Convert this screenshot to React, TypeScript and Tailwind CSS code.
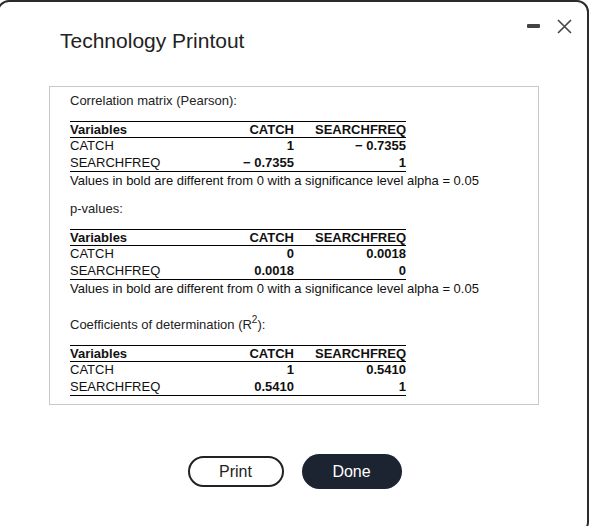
import React from "react";

type Row = { name: string; a: string; b: string };

const tables: { caption: React.ReactNode; rows: Row[]; note: boolean; gap: string }[] = [
  {
    caption: "Correlation matrix (Pearson):",
    rows: [
      { name: "CATCH", a: "1", b: "\u2212 0.7355" },
      { name: "SEARCHFREQ", a: "\u2212 0.7355", b: "1" },
    ],
    note: true,
    gap: "mt-0",
  },
  {
    caption: "p-values:",
    rows: [
      { name: "CATCH", a: "0", b: "0.0018" },
      { name: "SEARCHFREQ", a: "0.0018", b: "0" },
    ],
    note: true,
    gap: "mt-[12px]",
  },
  {
    caption: (
      <>
        Coefficients of determination (R
        <sup className="text-[10px] relative -top-[6px]">2</sup>):
      </>
    ),
    rows: [
      { name: "CATCH", a: "1", b: "0.5410" },
      { name: "SEARCHFREQ", a: "0.5410", b: "1" },
    ],
    note: false,
    gap: "mt-[20px]",
  },
];

function StatTable({ rows }: { rows: Row[] }) {
  return (
    <div className="w-[336px] border-t border-b border-black">
      <div className="grid grid-cols-[160px_64px_112px] h-[16px] leading-[16px] font-bold border-b border-black">
        <span>Variables</span>
        <span className="text-right">CATCH</span>
        <span className="text-right">SEARCHFREQ</span>
      </div>
      {rows.map((r) => (
        <div key={r.name} className="grid grid-cols-[160px_64px_112px] h-[16.5px] leading-[16px]">
          <span>{r.name}</span>
          <span className="text-right font-bold">{r.a}</span>
          <span className="text-right font-bold">{r.b}</span>
        </div>
      ))}
    </div>
  );
}

export default function App() {
  return (
    <div className="w-[590px] h-[526px] overflow-hidden bg-white font-['Liberation_Sans',Arial,sans-serif] text-[#111]">
      <div className="-ml-[3px] w-[592px] h-[534px] border-2 border-[#2b2b2b] rounded-[12px] bg-white">
        <div className="flex justify-between pt-[16px] pr-[15px]">
          <h1 className="ml-[61px] mt-[11px] text-[21px] leading-[24px] text-[#222]">Technology Printout</h1>
          <div className="flex items-center gap-[17px] h-[16px]">
            <span className="block w-[13px] h-[4px] rounded-[1px] bg-[#444]" />
            <svg width="15" height="15" viewBox="0 0 15 15" className="block">
              <path d="M1 1 L14 14 M14 1 L1 14" stroke="#444" strokeWidth="1.6" fill="none" />
            </svg>
          </div>
        </div>

        <div className="ml-[50px] mt-[33px] w-[490px] border border-[#c9c9c9] pt-[6px] pb-[8px] pl-[20px] text-[13px]">
          {tables.map((t, i) => (
            <div key={i} className={t.gap}>
              <p className="h-[16px] leading-[16px] text-[#222]">{t.caption}</p>
              <div className="mt-[12px]">
                <StatTable rows={t.rows} />
              </div>
              {t.note && (
                <p className="leading-[17px] whitespace-nowrap">
                  Values in bold are different from 0 with a significance level alpha = 0.05
                </p>
              )}
            </div>
          ))}
        </div>

        <div className="flex justify-center items-center gap-[18px] mt-[49px] ml-[3px]">
          <button className="w-[96px] h-[31px] rounded-full border-2 border-[#222] bg-white text-[16px] text-[#222]">
            Print
          </button>
          <button className="w-[100px] h-[35px] rounded-full bg-[#1c2331] text-[16px] text-white">
            Done
          </button>
        </div>
      </div>
    </div>
  );
}
